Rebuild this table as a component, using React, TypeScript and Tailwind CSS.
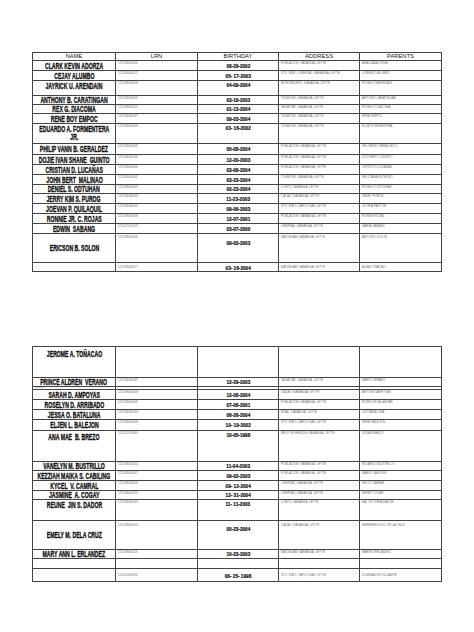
import clsx from "clsx";

interface Row {
  h: string;
  name?: string;
  lrn?: string;
  bday?: string;
  addr?: string;
  par?: string;
  // alignment overrides (full class strings)
  nameCls?: string;
  dateCls?: string;
  tinyCls?: string;
  tag?: string;
}

const tableOne: Row[] = [
  { h: "h-[10px]", name: "CLARK KEVIN ADORZA", lrn: "121538060016", bday: "06-29-2002", addr: "POBLACION, KANANGA, LEYTE", par: "ANALIZA ADORZA" },
  { h: "h-[10px]", name: "CEJAY ALUMBO", lrn: "121538060022", bday: "05- 17-2003", addr: "STO. NIÑO, LIBERTAD, KANANGA, LEYTE", par: "LORENZO ALUMBO" },
  { h: "h-[15px]", name: "JAYRICK U. ARENDAIN", lrn: "121538060008", bday: "04-09-2004", addr: "MONTEBUENO, KANANGA, LEYTE", par: "ROGELIO ARENDAIN", nameCls: "items-start pt-[1px]", dateCls: "items-start pt-[1px]" },
  { h: "h-[9px]", name: "ANTHONY B. CARATINGAN", lrn: "121538060019", bday: "03-18-2002", addr: "TUGBONG, KANANGA, LEYTE", par: "ANTONIO CARATINGAN" },
  { h: "h-[9px]", name: "REX G. DIACOMA", lrn: "121538060021", bday: "01-13-2004", addr: "TAGAYTAY, KANANGA, LEYTE", par: "ROGELIO DIACOMA" },
  { h: "h-[10px]", name: "RENE BOY EMPOC", lrn: "121538060027", bday: "09-03-2004", addr: "TUGBONG, KANANGA, LEYTE", par: "RENE EMPOC" },
  { h: "h-[20px]", name: "EDUARDO A. FORMENTERA\nJR.", lrn: "121538060030", bday: "03- 16-2002", addr: "TUGBONG, KANANGA, LEYTE", par: "ELSIE FORMENTERA", nameCls: "items-start pt-[1px]", dateCls: "items-start pt-[1px]" },
  { h: "h-[11px]", name: "PHILIP VANN B. GERALDEZ", lrn: "121538060033", bday: "05-08-2004", addr: "POBLACION, KANANGA, LEYTE", par: "FELOMINO GERALDEZ II" },
  { h: "h-[10px]", name: "DOJIE IVAN SHANE  GUINTO", lrn: "121538060035", bday: "12-20-2003", addr: "POBLACION, KANANGA, LEYTE", par: "DOLORES T. GUINTO" },
  { h: "h-[10px]", name: "CRISTIAN D. LUCAÑAS", lrn: "121538060040", bday: "03-08-2004", addr: "POBLACION, KANANGA, LEYTE", par: "CRISTUTO LUCAÑAS" },
  { h: "h-[10px]", name: "JOHN BERT  MALINAO", lrn: "121538060041", bday: "03-23-2004", addr: "TUGBONG, KANANGA, LEYTE", par: "FELICIANA ESTRUSO" },
  { h: "h-[9px]", name: "DENIEL S. ODTUHAN", lrn: "121538060047", bday: "02-23-2004", addr: "LONOY, KANANGA, LEYTE", par: "ROGELIO ODTUHAN" },
  { h: "h-[10px]", name: "JERRY KIM S. PUROG", lrn: "121538060053", bday: "11-23-2003", addr: "CACAO, KANANGA, LEYTE", par: "JERRY PUROG" },
  { h: "h-[10px]", name: "JOEVAN P. QUILAQUIL", lrn: "121538060055", bday: "09-06-2003", addr: "STO. NIÑO, CAPOOCAN, LEYTE", par: "GLORIA PASTOR" },
  { h: "h-[10px]", name: "RONNIE JR. C. ROJAS", lrn: "121538060058", bday: "12-07-2001", addr: "POBLACION, KANANGA, LEYTE", par: "RONNIE ROJAS" },
  { h: "h-[10px]", name: "EDWIN  SABANG", lrn: "121547070007", bday: "03-07-2000", addr: "LIBERTAD, KANANGA, LEYTE", par: "MARIA SABANG" },
  { h: "h-[29px]", name: "ERICSON B. SOLON", lrn: "121538060059", bday: "09-03-2003", addr: "NATUBGAN, KANANGA, LEYTE", par: "ANTONIO SOLON", dateCls: "items-start pt-[6px]", tinyCls: "items-start pt-[2px]" },
  { h: "h-[9px]", name: "", lrn: "121538060077", bday: "03- 16-2004", addr: "NATUBGAN, KANANGA, LEYTE", par: "ALMA TOÑACAO", dateCls: "items-end pb-[0px]", tinyCls: "items-end pb-[2px]" },
];

const tableTwo: Row[] = [
  { h: "h-[30px]", name: "JEROME A. TOÑACAO", nameCls: "items-start pt-[3px]" },
  { h: "h-[9px]", name: "PRINCE ALDREN  VERANO", lrn: "121538060087", bday: "12-29-2003", addr: "TAGAYTAY, KANANGA, LEYTE", par: "MARIO VERANO" },
  { h: "h-[3px]", tag: "TWO B" },
  { h: "h-[10px]", name: "SARAH D. AMPOYAS", lrn: "121538060003", bday: "12-08-2004", addr: "CACAO, KANANGA, LEYTE", par: "ANTONIO AMPOYAS" },
  { h: "h-[10px]", name: "ROSELYN D. ARRIBADO", lrn: "121538060005", bday: "07-06-2001", addr: "POBLACION, KANANGA, LEYTE", par: "ROSELYN DELANTAR" },
  { h: "h-[10px]", name: "JESSA O. BATALUNA", lrn: "121538060010", bday: "06-26-2004", addr: "RIZAL, KANANGA, LEYTE", par: "LEO BATALUNA" },
  { h: "h-[11px]", name: "ELJEN L. BALEJON", lrn: "121538060009", bday: "10- 19-2002", addr: "STO. NIÑO, CAPOOCAN, LEYTE", par: "RENE BALEJON" },
  { h: "h-[31px]", name: "ANA MAE  B. BREZO", lrn: "121541150090", bday: "10-05-1998", addr: "BRGY. RIVERSIDE, KANANGA, LEYTE", par: "SUSAN BREZO", nameCls: "items-start pt-[2px]", dateCls: "items-start pt-[1px]" },
  { h: "h-[9px]", name: "VANELYN M. BUSTRILLO", lrn: "121538060014", bday: "11-04-2003", addr: "POBLACION, KANANGA, LEYTE", par: "EDUARDO BUSTRILLO" },
  { h: "h-[10px]", name: "KEZZIAH MAIKA S. CABILING", lrn: "121538060017", bday: "09-02-2003", addr: "POBLACION, KANANGA, LEYTE", par: "MARIO CABILING" },
  { h: "h-[10px]", name: "KYCEL  V. CAMRAL", lrn: "121538060018", bday: "09- 12-2004", addr: "LIBERTAD, KANANGA, LEYTE", par: "NELLY CAMRAL" },
  { h: "h-[9px]", name: "JASMINE  A. COGAY", lrn: "121538060019", bday: "12- 31-2004", addr: "LIBERTAD, KANANGA, LEYTE", par: "HENRY COGAY" },
  { h: "h-[21px]", name: "REUNE  JIN S. DADOR", lrn: "121538060023", bday: "11- 11-2003", addr: "LONOY, KANANGA, LEYTE", par: "MA. VICTORIA DADOR", nameCls: "items-start pt-[1px]", dateCls: "items-start pt-[1px]" },
  { h: "h-[29px]", name: "EMELY M. DELA CRUZ", lrn: "121538060024", bday: "05-23-2004", addr: "CACAO, KANANGA, LEYTE", par: "HERMENEGILDO DE LA CRUZ", dateCls: "items-start pt-[5px]", tinyCls: "items-start pt-[3px]" },
  { h: "h-[9px]", name: "MARY ANN L. ERLANDEZ", lrn: "121538060025", bday: "10-23-2003", addr: "NATUBGAN, KANANGA, LEYTE", par: "MARINO ERLANDEZ" },
  { h: "h-[10px]" },
  { h: "h-[13px]", lrn: "121541080010", bday: "08- 25- 1998", addr: "STO. NIÑO, CAPOOCAN, LEYTE", par: "DOMINADOR VILLAMOR", dateCls: "items-end pb-[2px]", tinyCls: "items-center" },
];

const cols = "grid grid-cols-[82px_82px_81px_81px_82px]";
const line = "border-[#444]";

const Tiny = ({ text, cls }: { text?: string; cls?: string }) => (
  <div className={clsx("flex border-l pl-[2px]", line, cls ?? "items-start pt-[1px]")}>
    <span className="whitespace-nowrap text-[3px] leading-none text-[#707070]">{text}</span>
  </div>
);

const TableRow = ({ r, first }: { r: Row; first?: boolean }) => (
  <div className={clsx(cols, r.h, !first && "border-t", line)}>
    <div className={clsx("flex justify-center", r.nameCls ?? "items-center", r.tag && "justify-start pl-[2px]")}>
      {r.tag ? (
        <span className="text-[2.5px] leading-none text-[#777]">{r.tag}</span>
      ) : (
        <span className="inline-block scale-x-[0.57] whitespace-pre text-center text-[9px] font-bold leading-[8px] text-[#111] [-webkit-text-stroke:0.35px_#111]">
          {r.name}
        </span>
      )}
    </div>
    <Tiny text={r.lrn} cls={r.tinyCls} />
    <div className={clsx("flex justify-center border-l", line, r.dateCls ?? "items-center")}>
      <span className="inline-block scale-x-[0.78] whitespace-pre text-[6px] font-bold leading-none text-[#111] [-webkit-text-stroke:0.2px_#111]">
        {r.bday}
      </span>
    </div>
    <Tiny text={r.addr} cls={r.tinyCls} />
    <Tiny text={r.par} cls={r.tinyCls} />
  </div>
);

const Table = ({ rows, header, className }: { rows: Row[]; header?: boolean; className?: string }) => (
  <div className={clsx("w-[410px] border", line, className)}>
    {header && (
      <div className={clsx(cols, "h-[7px] text-[5.8px] leading-none text-[#222]")}>
        <div className="flex items-center justify-center">NAME</div>
        <div className={clsx("flex items-center justify-center border-l", line)}>LRN</div>
        <div className={clsx("flex items-center justify-center border-l", line)}>BIRTHDAY</div>
        <div className={clsx("flex items-center justify-center border-l", line)}>ADDRESS</div>
        <div className={clsx("flex items-center justify-center border-l", line)}>PARENTS</div>
      </div>
    )}
    {rows.map((r, i) => (
      <TableRow key={i} r={r} first={!header && i === 0} />
    ))}
  </div>
);

export default function App() {
  return (
    <div className="h-[632px] w-[474px] overflow-hidden bg-white font-['Liberation_Sans',Arial,sans-serif]">
      <div className="flex flex-col pl-[32px] pt-[52px]">
        <Table rows={tableOne} header />
        <Table rows={tableTwo} className="mt-[74px]" />
      </div>
    </div>
  );
}
